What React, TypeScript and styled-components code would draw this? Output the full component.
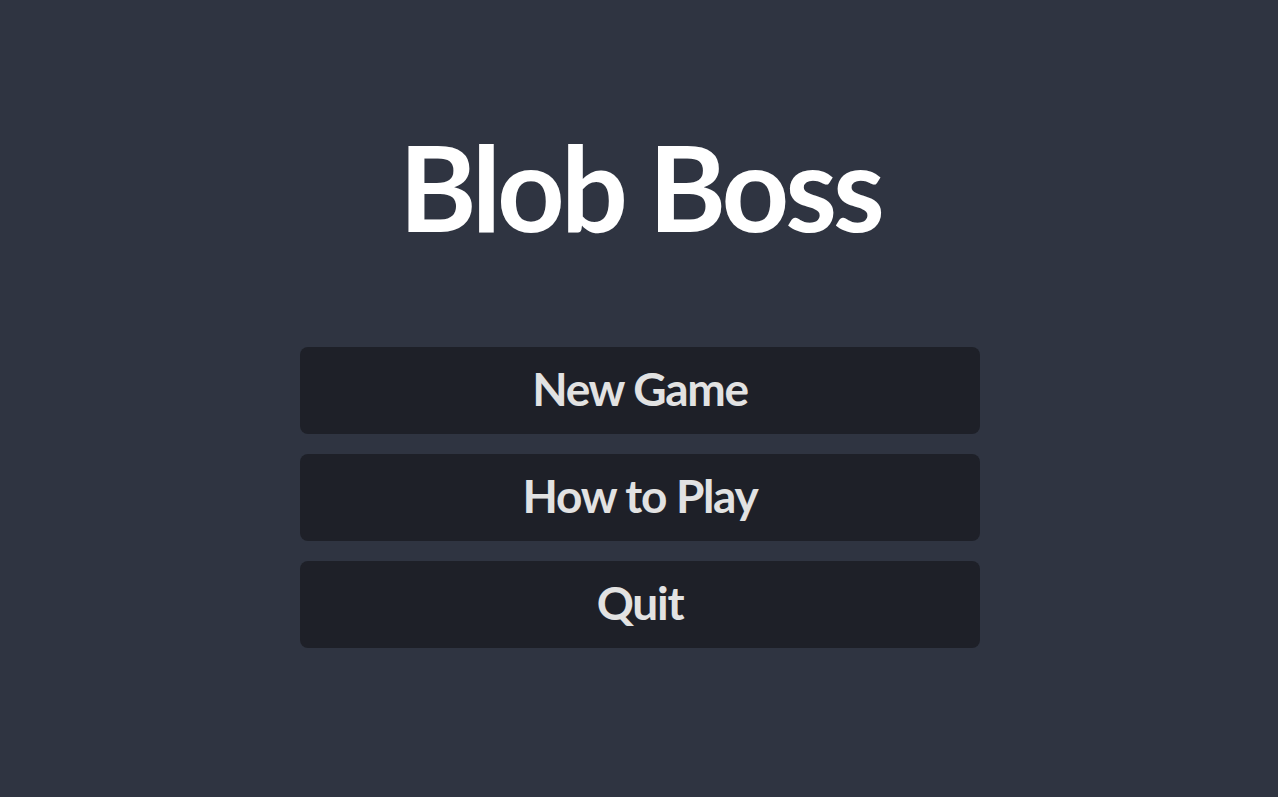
import React from "react";
import styled, { createGlobalStyle } from "styled-components";

const Global = createGlobalStyle`
  html, body { margin: 0; padding: 0; height: 100%; }
  body { background: #2f3441; font-family: Lato, "Open Sans", sans-serif; }
  #root { min-height: 100vh; }
`;

const Screen = styled.main`
  min-height: 100vh;
  display: flex;
  flex-direction: column;
  align-items: center;
  padding: 114px 0 0 2px;
  box-sizing: border-box;
`;

const Title = styled.h1`
  margin: 0;
  color: #ffffff;
  font-family: Lato, sans-serif;
  font-weight: 700;
  font-size: 118px;
  line-height: 146px;
  letter-spacing: -4px;
`;

const Menu = styled.nav`
  margin-top: 87px;
  width: 680px;
  display: flex;
  flex-direction: column;
  gap: 20px;
`;

const MenuButton = styled.button`
  height: 87px;
  padding: 0 0 4px;
  border: none;
  border-radius: 8px;
  background: #1e2028;
  color: #e2e2e2;
  font-family: Lato, sans-serif;
  font-weight: 700;
  font-size: 46px;
  letter-spacing: -1.3px;
  cursor: pointer;
`;

const items = ["New Game", "How to Play", "Quit"];

export default function App() {
  return (
    <>
      <Global />
      <Screen>
        <Title>Blob Boss</Title>
        <Menu>
          {items.map((label) => (
            <MenuButton key={label}>{label}</MenuButton>
          ))}
        </Menu>
      </Screen>
    </>
  );
}
